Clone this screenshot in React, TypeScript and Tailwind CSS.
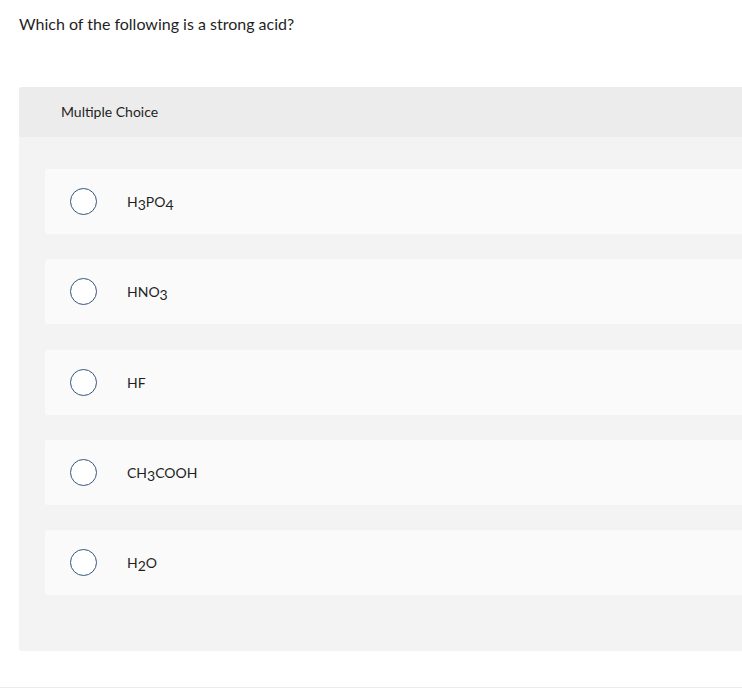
const options: { id: string; parts: (string | [string])[] }[] = [
  { id: 'a', parts: ['H', ['3'], 'PO', ['4']] },
  { id: 'b', parts: ['HNO', ['3']] },
  { id: 'c', parts: ['HF'] },
  { id: 'd', parts: ['CH', ['3'], 'COOH'] },
  { id: 'e', parts: ['H', ['2'], 'O'] },
];

function Formula({ parts }: { parts: (string | [string])[] }) {
  return (
    <span>
      {parts.map((p, i) =>
        typeof p === 'string' ? (
          <span key={i}>{p}</span>
        ) : (
          <span key={i} className="relative top-[3px]">
            {p[0]}
          </span>
        )
      )}
    </span>
  );
}

export default function App() {
  return (
    <div className="min-h-[694px] bg-white font-['Lato',sans-serif] text-[#1f1f1f]">
      <div className="h-[688px] border-b border-[#ececec]">
        <h1 className="pl-[19px] pt-[14px] text-[16px] leading-[20px]">
          Which of the following is a strong acid?
        </h1>

        <div className="ml-[19px] mt-[53px] rounded-l-[3px] bg-[#f3f3f3]">
          <div className="flex h-[50px] items-center rounded-tl-[3px] bg-[#ececec] pb-[2px] pl-[42px] text-[14px]">
            Multiple Choice
          </div>
          <div className="flex flex-col gap-[25.25px] pb-[56px] pl-[26px] pt-[32px]">
            {options.map((o) => (
              <div
                key={o.id}
                className="flex h-[65px] items-center rounded-l-[3px] bg-[#fafafa] text-[14px]"
              >
                <span className="ml-[25px] h-[27px] w-[27px] rounded-full border-[1.5px] border-[#34557c] bg-white" />
                <span className="ml-[30px]">
                  <Formula parts={o.parts} />
                </span>
              </div>
            ))}
          </div>
        </div>
      </div>
    </div>
  );
}
